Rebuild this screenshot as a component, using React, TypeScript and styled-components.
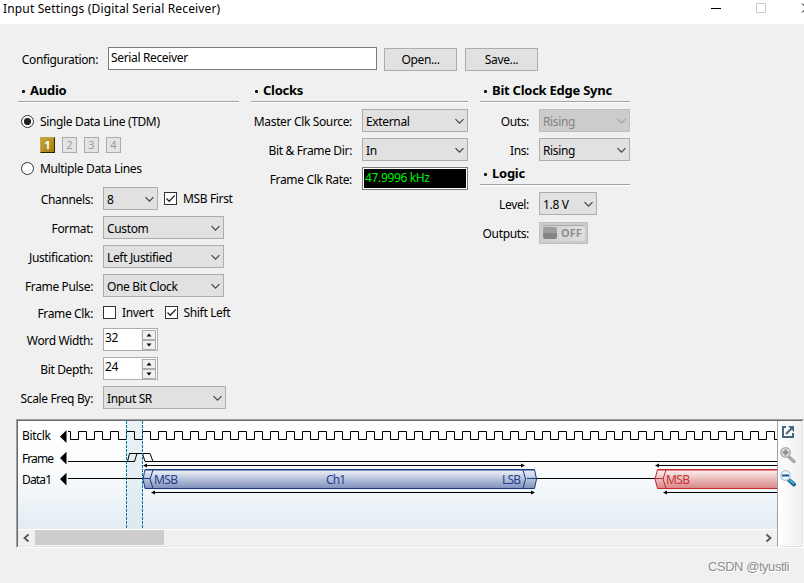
import React from "react";
import styled, { createGlobalStyle } from "styled-components";

const Global = createGlobalStyle`
  * { box-sizing: border-box; }
  html, body { margin: 0; padding: 0; background: #f0f0f0; overflow: hidden; }
  body { font-family: "Noto Sans", "Open Sans", sans-serif; font-size: 12px; color: #000; }
`;

const Window = styled.div`
  width: 804px;
  height: 583px;
  background: #f0f0f0;
  display: flex;
  flex-direction: column;
  overflow: hidden;
`;

const TitleBar = styled.header`
  height: 24px;
  flex: none;
  background: #fff;
  display: flex;
  justify-content: space-between;
  padding-left: 3px;
`;

const Title = styled.div`
  line-height: 17px;
  height: 17px;
  white-space: pre;
  letter-spacing: 0.15px;
`;

const Caption = styled.svg`
  display: block;
  flex: none;
`;

const Text = styled.span<{ $low?: boolean }>`
  white-space: pre;
  line-height: 17px;
  letter-spacing: -0.35px;
  padding-top: ${(p) => (p.$low ? 2 : 0)}px;
`;

const ConfigRow = styled.div`
  display: flex;
  height: 24px;
  margin-top: 23px;
  flex: none;
`;

const ConfigLabel = styled.div`
  width: 98px;
  margin-right: 10px;
  text-align: right;
  padding-top: 4px;
`;

const ConfigInput = styled.div`
  width: 269px;
  height: 23px;
  border: 1px solid #7a7a7a;
  background: #fff;
  padding: 1px 2px;
  margin-right: 7px;
  display: flex;
`;

const Button = styled.button`
  width: 73px;
  height: 23px;
  margin: 1px 8px 0 0;
  padding: 0;
  border: 1px solid #adadad;
  background: #e1e1e1;
  font: inherit;
  color: #000;
  display: flex;
  align-items: center;
  justify-content: center;
`;

const Columns = styled.main`
  display: flex;
  gap: 12px;
  height: 348px;
  flex: none;
  padding: 9px 0 0 18px;
`;

const Column = styled.section<{ $w: number }>`
  width: ${(p) => p.$w}px;
  flex: none;
`;

const Heading = styled.h2<{ $mt?: number }>`
  margin: ${(p) => p.$mt ?? 0}px 0 0;
  height: 22px;
  padding: 1px 0 0 4px;
  border-bottom: 1px solid #a0a0a0;
  box-shadow: 0 1px 0 #fff;
  font-size: 13px;
  font-weight: 700;
  line-height: 18px;
  letter-spacing: -0.25px;
  display: flex;
  white-space: pre;
`;

const Bullet = styled.i`
  width: 3px;
  height: 3px;
  border-radius: 1px;
  background: #111;
  margin: 9px 5px 0 0;
`;

const Row = styled.div<{ $h?: number; $label: number; $mt?: number }>`
  display: grid;
  grid-template-columns: ${(p) => p.$label}px 1fr;
  column-gap: 10px;
  height: ${(p) => p.$h ?? 29}px;
  margin-top: ${(p) => p.$mt ?? 0}px;
  align-items: center;
`;

const RowLabel = styled.div`
  text-align: right;
  white-space: pre;
  display: flex;
  justify-content: flex-end;
`;

const Controls = styled.div`
  display: flex;
  align-items: center;
`;

const SelectBox = styled.div<{ $w: number; $off?: boolean }>`
  width: ${(p) => p.$w}px;
  height: 23px;
  border: 1px solid ${(p) => (p.$off ? "#bfbfbf" : "#adadad")};
  background: ${(p) => (p.$off ? "#cccccc" : "#e1e1e1")};
  color: ${(p) => (p.$off ? "#838383" : "#000")};
  display: flex;
  align-items: center;
  justify-content: space-between;
  padding: 0 2px 0 3px;
  svg { stroke: ${(p) => (p.$off ? "#a6a6a6" : "#444")}; margin-top: 1px; }
`;

const RadioRow = styled.div<{ $h: number; $pt?: number }>`
  display: flex;
  align-items: center;
  height: ${(p) => p.$h}px;
  padding: ${(p) => p.$pt ?? 0}px 0 0 3px;
  gap: 6px;
`;

const Radio = styled.span<{ $on?: boolean }>`
  width: 13px;
  height: 13px;
  border-radius: 50%;
  border: 1px solid #333;
  background: ${(p) => (p.$on ? "radial-gradient(circle, #222 0 3.3px, #fff 4px)" : "#fff")};
`;

const Chips = styled.div`
  display: flex;
  gap: 7px;
  padding-left: 22px;
  height: 16px;
`;

const Chip = styled.span<{ $on?: boolean }>`
  width: 15px;
  height: 16px;
  font-size: 11px;
  line-height: 14px;
  text-align: center;
  border: 1px solid;
  border-color: ${(p) => (p.$on ? "#c8a848 #2c2000 #2c2000 #c8a848" : "#a5adb2")};
  background: ${(p) => (p.$on ? "linear-gradient(135deg, #c9a53a, #a37c10)" : "#e4e4e4")};
  color: ${(p) => (p.$on ? "#fff" : "#9a9a9a")};
  font-weight: ${(p) => (p.$on ? 700 : 400)};
`;

const Box = styled.span<{ $ml?: number }>`
  width: 13px;
  height: 13px;
  border: 1px solid #333;
  background: #fff;
  margin: -1px 6px 0 ${(p) => p.$ml ?? 0}px;
  flex: none;
  svg { display: block; }
`;

const Spin = styled.div`
  width: 55px;
  height: 23px;
  border: 1px solid #abadb3;
  background: #fff;
  display: flex;
  justify-content: space-between;
  padding: 0 1px 0 1px;
`;

const SpinButtons = styled.div`
  width: 15px;
  height: 19px;
  margin-top: 1px;
  background: #f0f0f0;
  display: flex;
  flex-direction: column;
  padding-left: 1px;
`;

const SpinButton = styled.span`
  width: 14px;
  height: 10px;
  border: 1px solid #acacac;
  background: #f0f0f0;
  svg { display: block; }
`;

const Rate = styled.div`
  width: 106px;
  height: 23px;
  border: 1px solid #7a7a7a;
  background: #000;
  box-shadow: inset 0 0 0 1px #fff;
  color: #00f000;
  padding: 1px 2px;
  display: flex;
`;

const Toggle = styled.div`
  width: 49px;
  height: 22px;
  border: 1px solid #bfbfbf;
  background: #ccc;
  padding: 2px;
`;

const ToggleTrack = styled.div`
  height: 16px;
  border-top: 1px solid #aaa;
  border-radius: 2px;
  background: linear-gradient(90deg, #cfcfcf, #dedede);
  display: flex;
  align-items: center;
  font-size: 11px;
  line-height: 13px;
  padding-bottom: 1px;
  font-weight: 700;
  color: #909090;
`;

const ToggleKnob = styled.span`
  width: 14px;
  height: 12px;
  border-radius: 2px;
  margin: 1px 4px 0 1px;
  background: linear-gradient(#9d9d9d 50%, #858585 50%);
`;

const Viewer = styled.section`
  margin-left: 16px;
  width: 788px;
  height: 129px;
  flex: none;
  border-left: 1px solid #a0a0a0;
  border-top: 1px solid #a0a0a0;
  border-right: 1px solid #fff;
  border-bottom: 1px solid #fff;
`;

const ViewerInner = styled.div`
  height: 127px;
  border-left: 1px solid #696969;
  border-top: 1px solid #696969;
  border-right: 1px solid #e3e3e3;
  border-bottom: 1px solid #e3e3e3;
  display: flex;
`;

const Plot = styled.div`
  width: 759px;
  flex: none;
`;

const Waves = styled.svg`
  display: block;
  background: linear-gradient(#ffffff, #fafcfd 45%, #e2ecf3);
`;

const ScrollBar = styled.div`
  height: 17px;
  background: #f0f0f0;
  border-top: 1px solid #fff;
  display: flex;
  justify-content: space-between;
`;

const Thumb = styled.div`
  width: 129px;
  height: 15px;
  background: #cdcdcd;
  margin-right: auto;
`;

const ToolStrip = styled.div`
  flex: 1;
  border-left: 1px solid #a0a0a0;
  background: linear-gradient(90deg, #fff, #f0f0f0);
`;

const Footer = styled.footer`
  display: flex;
  justify-content: flex-end;
  padding: 11px 15px 0 0;
  font-family: "Liberation Sans", Arial, sans-serif;
  font-size: 13px;
  letter-spacing: -0.45px;
  color: #8f8f8f;
  text-shadow: 1px 1px 0 #fff;
`;

const Chevron = () => (
  <svg width="11" height="7" viewBox="0 0 11 7" fill="none" strokeWidth="1.2">
    <path d="M1.5 1.2 5.5 5.2 9.5 1.2" />
  </svg>
);

const Select = ({ w, value, off }: { w: number; value: string; off?: boolean }) => (
  <SelectBox $w={w} $off={off}>
    <Text $low>{value}</Text>
    <Chevron />
  </SelectBox>
);

const Check = ({ on, ml }: { on?: boolean; ml?: number }) => (
  <Box $ml={ml}>
    {on && (
      <svg width="11" height="11" viewBox="0 0 11 11" fill="none" stroke="#222" strokeWidth="1.3">
        <path d="M1.5 5.5 4.2 8.2 9.8 2.4" />
      </svg>
    )}
  </Box>
);

const Spinner = ({ value }: { value: string }) => (
  <Spin>
    <Text>{value}</Text>
    <SpinButtons>
      <SpinButton>
        <svg width="12" height="8"><path d="M3.5 5.5h5L6 2.5z" /></svg>
      </SpinButton>
      <SpinButton>
        <svg width="12" height="8"><path d="M3.5 2.5h5L6 5.5z" /></svg>
      </SpinButton>
    </SpinButtons>
  </Spin>
);

const Field = ({ label, labelWidth, h, mt, children }: {
  label: string; labelWidth: number; h?: number; mt?: number; children: React.ReactNode;
}) => (
  <Row $label={labelWidth} $h={h} $mt={mt}>
    <RowLabel><Text $low>{label}</Text></RowLabel>
    <Controls>{children}</Controls>
  </Row>
);

const clockPath = () => {
  let d = "M50 10.5H52.5V18.5";
  for (let x = 60.5; x < 750; x += 16) d += `H${x}V10.5H${x + 8}V18.5`;
  return d + "H759";
};

const WaveView = () => (
  <Waves width="759" height="108" viewBox="0 0 759 108" fontSize="12">
    <defs>
      <linearGradient id="blue" x1="0" y1="0" x2="0" y2="1">
        <stop offset="0" stopColor="#f2f5fb" />
        <stop offset="1" stopColor="#7d8fbb" />
      </linearGradient>
      <linearGradient id="red" x1="0" y1="0" x2="0" y2="1">
        <stop offset="0" stopColor="#fdf3f3" />
        <stop offset="1" stopColor="#d98585" />
      </linearGradient>
    </defs>
    <rect x="109" width="16" height="108" fill="#d9e8ef" opacity="0.6" />
    <text x="4" y="19" textLength="29">Bitclk</text>
    <text x="4" y="42" textLength="32">Frame</text>
    <text x="4" y="63" textLength="30">Data1</text>
    <path d="M42 15.5 48.500 9.200V22zM42 37 48.500 30.700V43.500zM42 58 48.500 51.700V64.500z" />
    <g fill="none" stroke="#000">
      <path d={clockPath()} />
      <path d="M50 40.500H116.500L119 32.500M109.500 40.500 111.500 32.500H132L135 40.500M124.500 32.500 127 40.500H759" />
      <path d="M50 57.500H125M518 57.500H637M127 44.500H504M134 71.500H513M640 44.500H759M648 71.500H759" />
    </g>
    <path d="M125 44.500l4-2v4zM133 71.500l4-2v4zM507 44.500l-4-2v4zM517 71.500l-4-2v4zM637 44.500l4-2v4zM645 71.500l4-2v4z" />
    <path d="M127 48.500H516.500L518.500 58 516.500 67.500H127L125 58z" fill="url(#blue)" stroke="#193a80" />
    <path d="M127 49.500H516.500" stroke="#193a80" opacity="0.5" />
    <path d="M135 49 132 58 135 67.500M505 49 507.500 58 505 67.500M125 57.500H132M509 57.500H518" fill="none" stroke="#193a80" />
    <path d="M760 48.500H639.500L637 58 639.500 67.500H760" fill="url(#red)" stroke="#c32a2a" />
    <path d="M640 49.500H760" stroke="#c32a2a" opacity="0.5" />
    <path d="M648 49 645 58 648 67.500M637 57.500H645" fill="none" stroke="#c32a2a" />
    <g fill="#24408c">
      <text x="136" y="63" textLength="24">MSB</text>
      <text x="308" y="63" textLength="20">Ch1</text>
      <text x="484" y="63" textLength="19">LSB</text>
    </g>
    <text x="648" y="63" textLength="24" fill="#c63030">MSB</text>
    <path d="M108.500 0V108M124.500 0V108" stroke="#0f73a8" strokeDasharray="3 1" />
  </Waves>
);

const Tools = () => (
  <svg width="24" height="80" viewBox="0 0 24 80" fill="none">
    <path d="M8 6H5V16H15V12" stroke="#44687f" strokeWidth="2" />
    <path d="M8 13 14 7" stroke="#44687f" strokeWidth="2" />
    <path d="M10 5H16V11z" fill="#44687f" />
    <path d="M11 36 16 40.500" stroke="#aaa" strokeWidth="3.500" strokeLinecap="round" />
    <circle cx="7.500" cy="31.500" r="4.800" fill="#ddd" stroke="#aaa" strokeWidth="1.200" />
    <path d="M4.500 31.500H10.500M7.500 28.500V34.500" stroke="#888" strokeWidth="2" />
    <path d="M11 59 16 63.500" stroke="#235a80" strokeWidth="4" strokeLinecap="round" />
    <path d="M11 58.500 16 63" stroke="#35aff0" strokeWidth="2" />
    <circle cx="7.500" cy="54.500" r="4.800" fill="#eef8ff" stroke="#a9c3d4" strokeWidth="1.200" />
    <path d="M4 54.500H11" stroke="#16558c" strokeWidth="2" />
  </svg>
);

export default function App() {
  return (
    <Window>
      <Global />
      <TitleBar>
        <Title>Input Settings (Digital Serial Receiver)</Title>
        <Caption width="96" height="24" fill="none">
          <path d="M3 8.500H13" stroke="#000" />
          <rect x="48.500" y="3.500" width="9" height="9" stroke="#ccc" />
          <path d="M94 3.500 103 12.500M94 12.500 103 3.500" stroke="#000" />
        </Caption>
      </TitleBar>
      <ConfigRow>
        <ConfigLabel><Text>Configuration:</Text></ConfigLabel>
        <ConfigInput><Text>Serial Receiver</Text></ConfigInput>
        <Button><Text>Open...</Text></Button>
        <Button><Text>Save...</Text></Button>
      </ConfigRow>
      <Columns>
        <Column $w={221}>
          <Heading><Bullet />Audio</Heading>
          <RadioRow $h={35} $pt={4}><Radio $on /><Text>Single Data Line (TDM)</Text></RadioRow>
          <Chips><Chip $on>1</Chip><Chip>2</Chip><Chip>3</Chip><Chip>4</Chip></Chips>
          <RadioRow $h={31}><Radio /><Text>Multiple Data Lines</Text></RadioRow>
          <Field label="Channels:" labelWidth={75}>
            <Select w={55} value="8" /><Check on ml={6} /><Text>MSB First</Text>
          </Field>
          <Field label="Format:" labelWidth={75}><Select w={121} value="Custom" /></Field>
          <Field label="Justification:" labelWidth={75}><Select w={121} value="Left Justified" /></Field>
          <Field label="Frame Pulse:" labelWidth={75}><Select w={121} value="One Bit Clock" /></Field>
          <Field label="Frame Clk:" labelWidth={75} h={25}>
            <Check /><Text>Invert</Text><Check on ml={11} /><Text>Shift Left</Text>
          </Field>
          <Field label="Word Width:" labelWidth={75}><Spinner value="32" /></Field>
          <Field label="Bit Depth:" labelWidth={75}><Spinner value="24" /></Field>
          <Field label="Scale Freq By:" labelWidth={75}><Select w={123} value="Input SR" /></Field>
        </Column>
        <Column $w={217}>
          <Heading><Bullet />Clocks</Heading>
          <Field label="Master Clk Source:" labelWidth={101} mt={4}><Select w={106} value="External" /></Field>
          <Field label="Bit &amp; Frame Dir:" labelWidth={101}><Select w={106} value="In" /></Field>
          <Field label="Frame Clk Rate:" labelWidth={101}><Rate><Text>47.9996 kHz</Text></Rate></Field>
        </Column>
        <Column $w={150}>
          <Heading><Bullet />Bit Clock Edge Sync</Heading>
          <Field label="Outs:" labelWidth={49} mt={4}><Select w={91} value="Rising" off /></Field>
          <Field label="Ins:" labelWidth={49}><Select w={91} value="Rising" /></Field>
          <Heading $mt={-1}><Bullet />Logic</Heading>
          <Field label="Level:" labelWidth={49} mt={4}><Select w={58} value="1.8 V" /></Field>
          <Field label="Outputs:" labelWidth={49}>
            <Toggle><ToggleTrack><ToggleKnob />OFF</ToggleTrack></Toggle>
          </Field>
        </Column>
      </Columns>
      <Viewer>
        <ViewerInner>
          <Plot>
            <WaveView />
            <ScrollBar>
              <svg width="17" height="16" fill="none" stroke="#555" strokeWidth="1.800"><path d="M10.500 4.500 6.500 8 10.500 11.500" /></svg>
              <Thumb />
              <svg width="17" height="16" fill="none" stroke="#555" strokeWidth="1.800"><path d="M6.500 4.500 10.500 8 6.500 11.500" /></svg>
            </ScrollBar>
          </Plot>
          <ToolStrip><Tools /></ToolStrip>
        </ViewerInner>
      </Viewer>
      <Footer>CSDN @tyustli</Footer>
    </Window>
  );
}
